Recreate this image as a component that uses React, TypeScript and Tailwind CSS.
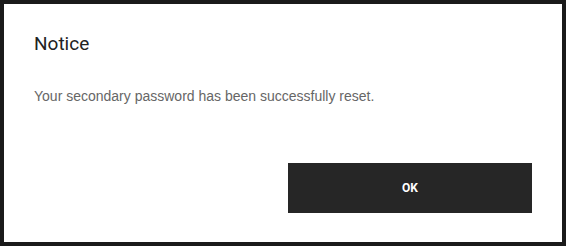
export default function App() {
  return (
    <div className="h-screen w-full bg-[#1a1a1a] p-1">
      <div className="flex h-full flex-col bg-white px-[30px] pt-[28px] pb-[29px]">
        <h2
          className="text-[19px] leading-[24px] text-[#222]"
          style={{ fontFamily: 'Roboto, "Noto Sans", sans-serif' }}
        >
          Notice
        </h2>
        <p
          className="mt-[30px] text-[14px] leading-[20px] text-[#666]"
          style={{ fontFamily: '"Liberation Sans", Arial, sans-serif' }}
        >
          Your secondary password has been successfully reset.
        </p>
        <div className="mt-auto flex justify-end">
          <button
            className="h-[50px] w-[244px] bg-[#262626] text-[12px] font-bold text-white"
            style={{ fontFamily: 'Roboto, "Noto Sans", sans-serif' }}
          >
            OK
          </button>
        </div>
      </div>
    </div>
  );
}
